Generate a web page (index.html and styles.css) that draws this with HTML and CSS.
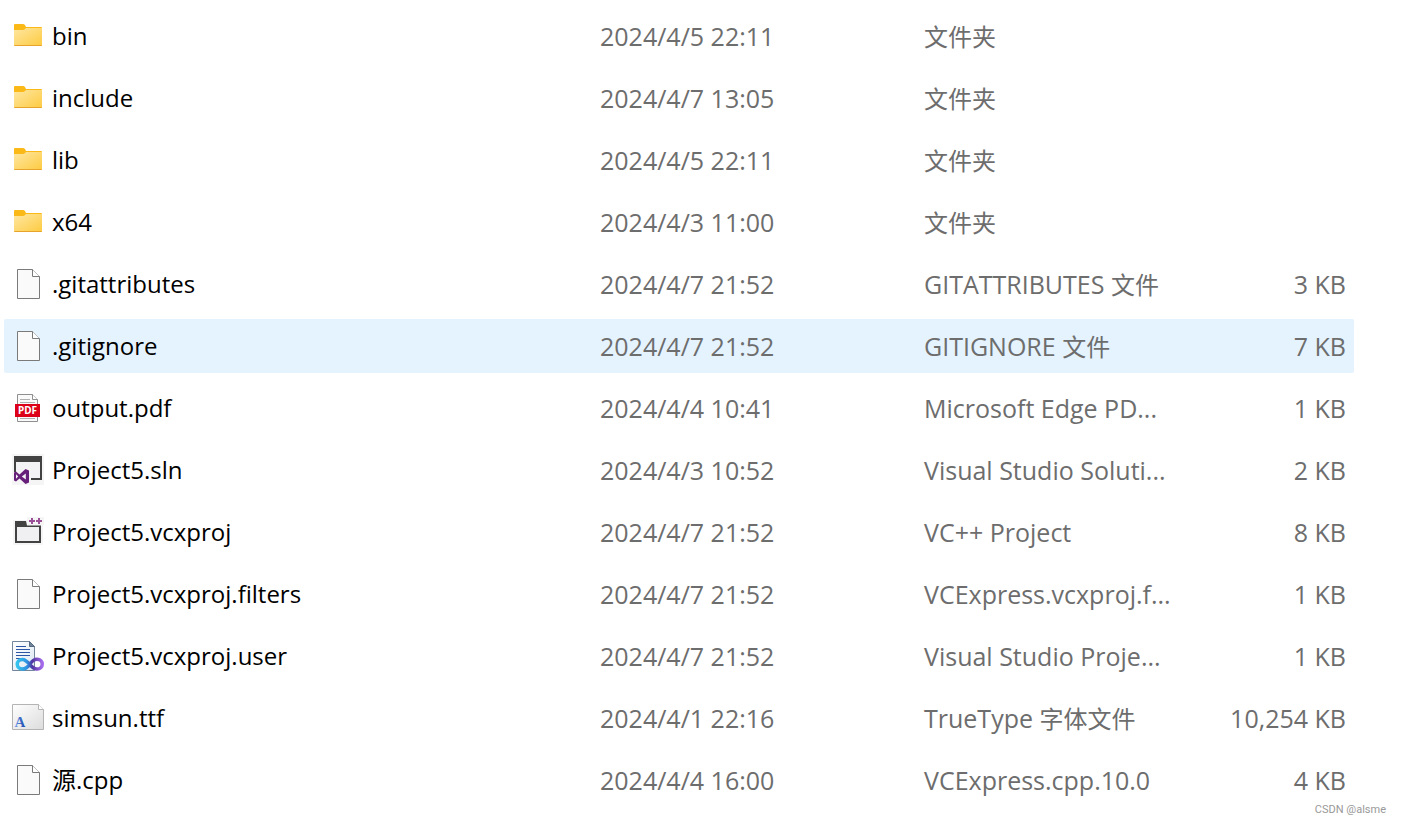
FILE: index.html
```html
<!DOCTYPE html>
<html lang="zh-CN">
<head>
    <meta charset="utf-8">
    <title>Project5</title>
    <link rel="stylesheet" href="styles.css">
</head>
<body>
<!-- icons -->
<svg class="sprite" aria-hidden="true">
    <defs>
        <linearGradient id="folder-fill" x1="0" y1="0" x2="1" y2="1">
            <stop offset="0" stop-color="#ffe7a2"/>
            <stop offset="1" stop-color="#fdcb41"/>
        </linearGradient>
        <linearGradient id="doc-fill" x1="0" y1="0" x2="1" y2="1">
            <stop offset="0" stop-color="#ffffff"/>
            <stop offset="1" stop-color="#dce8f2"/>
        </linearGradient>
        <linearGradient id="loop-fill" x1="0" y1="0" x2="1" y2="0">
            <stop offset="0" stop-color="#35c4ee"/>
            <stop offset="0.4" stop-color="#2e8fe0"/>
            <stop offset="0.6" stop-color="#4f35a0"/>
            <stop offset="1" stop-color="#a56bea"/>
        </linearGradient>
        <linearGradient id="font-fill" x1="0" y1="0" x2="1" y2="1">
            <stop offset="0" stop-color="#ffffff"/>
            <stop offset="1" stop-color="#dcdcdc"/>
        </linearGradient>
        <linearGradient id="a-fill" x1="0" y1="0" x2="1" y2="0">
            <stop offset="0" stop-color="#6d9be8"/>
            <stop offset="1" stop-color="#1d44a8"/>
        </linearGradient>
    </defs>
    <symbol id="folder" viewBox="0 0 32 32">
        <path d="M2 5Q2 4 3 4H11Q12 4 13 5L14 7H29Q30 7 30 8V12H2z" fill="#fbb917"/>
        <path d="M2 10H11Q12 10 13 9L14 8H30V25Q30 26 29 26H3Q2 26 2 25z" fill="url(#folder-fill)"/>
        <path d="M2 25H30Q30 26 29 26H3Q2 26 2 25z" fill="#e8a32c"/>
    </symbol>
    <symbol id="file" viewBox="0 0 32 32">
        <path d="M5.5 1.5H20.5L27.5 8.5V30.5H5.5z" fill="#fafafa" stroke="#7a7a7a"/>
        <path d="M20.5 1.5V8.5H27.5" fill="#fff" stroke="#7a7a7a"/>
    </symbol>
</svg>

<main class="explorer">
    <table class="files">
        <colgroup>
            <col>
            <col class="col-date">
            <col class="col-type">
            <col class="col-size">
        </colgroup>
        <tbody>
            <tr>
                <td class="name"><div class="entry"><svg class="icon"><use href="#folder"/></svg>bin</div></td>
                <td>2024/4/5 22:11</td>
                <td><span class="zh">文件夹</span></td>
                <td class="size"></td>
            </tr>
            <tr>
                <td class="name"><div class="entry"><svg class="icon"><use href="#folder"/></svg>include</div></td>
                <td>2024/4/7 13:05</td>
                <td><span class="zh">文件夹</span></td>
                <td class="size"></td>
            </tr>
            <tr>
                <td class="name"><div class="entry"><svg class="icon"><use href="#folder"/></svg>lib</div></td>
                <td>2024/4/5 22:11</td>
                <td><span class="zh">文件夹</span></td>
                <td class="size"></td>
            </tr>
            <tr>
                <td class="name"><div class="entry"><svg class="icon"><use href="#folder"/></svg>x64</div></td>
                <td>2024/4/3 11:00</td>
                <td><span class="zh">文件夹</span></td>
                <td class="size"></td>
            </tr>
            <tr>
                <td class="name"><div class="entry"><svg class="icon"><use href="#file"/></svg>.gitattributes</div></td>
                <td>2024/4/7 21:52</td>
                <td>GITATTRIBUTES <span class="zh">文件</span></td>
                <td class="size">3 KB</td>
            </tr>
            <tr class="hover">
                <td class="name"><div class="entry"><svg class="icon"><use href="#file"/></svg>.gitignore</div></td>
                <td>2024/4/7 21:52</td>
                <td>GITIGNORE <span class="zh">文件</span></td>
                <td class="size">7 KB</td>
            </tr>
            <tr>
                <td class="name">
                    <div class="entry">
                        <svg class="icon" viewBox="0 0 32 32">
                            <path d="M5.5 2.5H20.5L25.5 7.5V29.5H5.5z" fill="#fafafa" stroke="#8f8f8f"/>
                            <path d="M20.5 2.5V7.5H25.5" fill="#fff" stroke="#8f8f8f"/>
                            <path d="M8 7.5H18M8 10.5H23M8 26.5H23" stroke="#b0b0b0"/>
                            <rect x="3" y="12" width="25" height="13" fill="#dc0019"/>
                            <text x="15.5" y="22" class="pdf-text">PDF</text>
                        </svg>output.pdf
                    </div>
                </td>
                <td>2024/4/4 10:41</td>
                <td>Microsoft Edge PD...</td>
                <td class="size">1 KB</td>
            </tr>
            <tr>
                <td class="name">
                    <div class="entry">
                        <svg class="icon" viewBox="0 0 32 32">
                            <rect width="32" height="31" fill="#f5f5f5"/>
                            <path d="M2 2H30V26H19V24H28V8H4V18H2z" fill="#424242"/>
                            <path d="M4 8H28V24H19V14L14 13L8 18H4z" fill="#f3f2f4"/>
                            <path fill-rule="evenodd" d="M13.5 15L17 16.5V28.5L13.5 30L7.5 24.6L4 27.500L2 26.500V18.5L4 17.6L7.5 20.4zM13.8 19.5L9.8 22.500L13.8 25.600zM4 20.3V24.700L6.200 22.500z" fill="#68217a"/>
                        </svg>Project5.sln
                    </div>
                </td>
                <td>2024/4/3 10:52</td>
                <td>Visual Studio Soluti...</td>
                <td class="size">2 KB</td>
            </tr>
            <tr>
                <td class="name">
                    <div class="entry">
                        <svg class="icon" viewBox="0 0 32 32">
                            <rect x="1" y="4" width="30" height="25" fill="#f5f5f5"/>
                            <path d="M3 5H14L15 9.5H29V27H3z" fill="#424242"/>
                            <rect x="15" y="1" width="17" height="8" fill="#f5f5f5"/>
                            <rect x="5" y="11" width="22" height="14" fill="#f0eff1"/>
                            <path d="M17 5H23M20 2V8M24 5H30M27 2V8" stroke="#9b4f96" stroke-width="2"/>
                        </svg>Project5.vcxproj
                    </div>
                </td>
                <td>2024/4/7 21:52</td>
                <td>VC++ Project</td>
                <td class="size">8 KB</td>
            </tr>
            <tr>
                <td class="name"><div class="entry"><svg class="icon"><use href="#file"/></svg>Project5.vcxproj.filters</div></td>
                <td>2024/4/7 21:52</td>
                <td>VCExpress.vcxproj.f...</td>
                <td class="size">1 KB</td>
            </tr>
            <tr>
                <td class="name">
                    <div class="entry">
                        <svg class="icon" viewBox="0 0 32 32">
                            <path d="M0.5 1.5H17.5L22.5 6.5V30.5H0.5z" fill="url(#doc-fill)" stroke="#72879b"/>
                            <path d="M17.5 1.5V6.5H22.5z" fill="#6f8497" stroke="#566b80"/>
                            <path d="M4 6.5H14M4 9.5H18M4 12.5H18M4 15.5H18M4 18.5H10" stroke="#2c56a5"/>
                            <path d="M18 25C15.5 22 13.5 19.5 10.5 19.500C3.500 19.500 3.500 29 10.500 29C18 29 17.500 19.300 25 19.300C32 19.300 32 29 25 29C22 29 20.500 27.500 18 25" fill="none" stroke="url(#loop-fill)" stroke-width="3.500"/>
                        </svg>Project5.vcxproj.user
                    </div>
                </td>
                <td>2024/4/7 21:52</td>
                <td>Visual Studio Proje...</td>
                <td class="size">1 KB</td>
            </tr>
            <tr>
                <td class="name">
                    <div class="entry">
                        <svg class="icon" viewBox="0 0 32 32">
                            <path d="M0.5 2.5H26.5L31.5 7.5V27.5H0.5z" fill="url(#font-fill)" stroke="#b4b4b4"/>
                            <path d="M26.5 2.5V7.5H31.5" fill="#fff" stroke="#b4b4b4"/>
                            <text x="8" y="25" class="font-text">A</text>
                        </svg>simsun.ttf
                    </div>
                </td>
                <td>2024/4/1 22:16</td>
                <td>TrueType <span class="zh">字体文件</span></td>
                <td class="size">10,254 KB</td>
            </tr>
            <tr>
                <td class="name"><div class="entry"><svg class="icon"><use href="#file"/></svg><span><span class="zh">源</span>.cpp</span></div></td>
                <td>2024/4/4 16:00</td>
                <td>VCExpress.cpp.10.0</td>
                <td class="size">4 KB</td>
            </tr>
        </tbody>
    </table>
    <span class="watermark">CSDN @alsme</span>
</main>
</body>
</html>
```

FILE: styles.css
```css
body {
    margin: 0;
    background-color: white;
    color: #6d6d6d;
    font-family: "Open Sans", "Noto Sans CJK SC", sans-serif;
    font-size: 25px;
    line-height: 34px;
}
.sprite {
    position: absolute;
    width: 0;
    height: 0;
}
.explorer {
    position: relative;
    padding: 1px 47px 8px 4px;
}
.files {
    width: 100%;
    table-layout: fixed;
    border-collapse: separate;
    border-spacing: 0 8px;
}
.col-date {
    width: 324px;
}
.col-type {
    width: 250px;
}
.col-size {
    width: 180px;
}
.files td {
    height: 54px;
    padding: 0;
    white-space: nowrap;
}
.files .name {
    padding-left: 8px;
    color: black;
    font-size: 24px;
    line-height: 36px;
}
.entry {
    display: flex;
    align-items: center;
    gap: 8px;
}
.icon {
    width: 32px;
    height: 32px;
    flex: none;
}
.files .size {
    padding-right: 8px;
    text-align: right;
}
.hover td {
    background-color: #e5f3ff;
}
.hover td:first-child {
    border-radius: 2px 0 0 2px;
}
.hover td:last-child {
    border-radius: 0 2px 2px 0;
}
.zh {
    font-family: "Noto Sans CJK SC", sans-serif;
    font-size: 24px;
    line-height: 24px;
}
.pdf-text {
    font: bold 10px "Noto Sans", sans-serif;
    fill: white;
    text-anchor: middle;
}
.font-text {
    font: bold 15px "Liberation Serif", serif;
    fill: url(#a-fill);
    text-anchor: middle;
}
.watermark {
    position: absolute;
    right: 15px;
    bottom: 7px;
    font-family: Roboto, Arial, sans-serif;
    font-size: 11px;
    line-height: 12px;
    color: #999;
}
```
